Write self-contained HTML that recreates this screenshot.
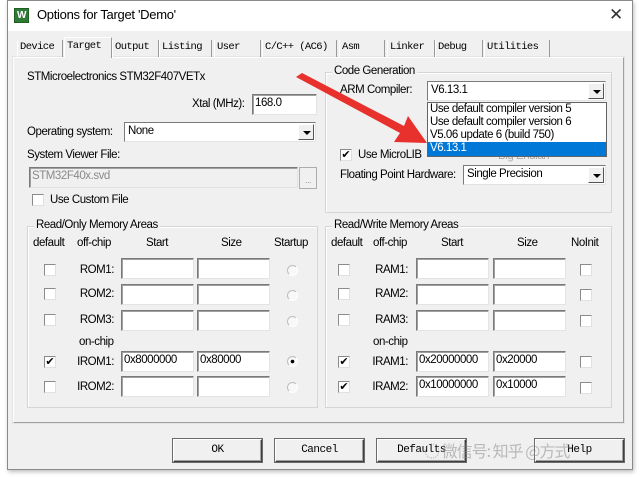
<!DOCTYPE html>
<html><head><meta charset="utf-8"><style>
*{box-sizing:border-box;margin:0;padding:0}
body{width:640px;height:477px;background:#fff;position:relative;overflow:hidden;font-family:"Liberation Sans",Arial,sans-serif;font-size:11.5px;letter-spacing:-.45px;color:#000}
.a{position:absolute;white-space:nowrap}
.win{position:absolute;left:7px;top:0;width:626px;height:470px;background:#f0f0f0;border:1px solid #8a8a8a;box-shadow:1px 2px 4px rgba(0,0,0,.25)}
.title{position:absolute;left:8px;top:1px;width:624px;height:30px;background:#fff}
.panel{position:absolute;left:13px;top:57px;width:611px;height:366px;border:1px solid #fff;border-right-color:#a0a0a0;border-bottom-color:#a0a0a0;outline:1px solid #e3e3e3}
.tab{position:absolute;top:40px;height:17px;font-family:"Liberation Mono",monospace;font-size:10.5px;letter-spacing:-.6px;white-space:nowrap;border-left:1px solid #fff;border-right:1px solid #999;padding-left:2px;line-height:15px}
.tab.sel{top:37px;height:21px;background:#f0f0f0;border-top:1px solid #fff;z-index:2}
.grp{position:absolute;border:1px solid #d5d5d5;box-shadow:1px 1px 0 #fff inset}
.lg{position:absolute;background:#f0f0f0;padding:0 2px;top:-8px;left:6px;white-space:nowrap}
.in{position:absolute;background:#fff;border:1px solid #7a7a7a;border-right-color:#e3e3e3;border-bottom-color:#e3e3e3;box-shadow:inset 1px 1px 0 #a0a0a0;height:21px;padding:2px 0 0 2px;white-space:nowrap;overflow:hidden}
.cb{position:absolute;width:12px;height:12px;background:#fff;border:1px solid #8a8a8a;border-right-color:#e0e0e0;border-bottom-color:#e0e0e0;font-size:11px;line-height:10px;text-align:center;letter-spacing:0}
.rd{position:absolute;width:11px;height:11px;border-radius:50%;border:1px solid #bdbdbd;border-right-color:#fff;border-bottom-color:#fff;background:#f8f8f8}
.sel2{position:absolute;background:#fff;border:1px solid #7a7a7a;border-right-color:#e3e3e3;border-bottom-color:#e3e3e3;height:20px;padding:2px 0 0 3px;white-space:nowrap}
.dd{position:absolute;right:1px;top:1px;width:16px;height:16px;background:#f0f0f0;border:1px solid #fff;border-right-color:#555;border-bottom-color:#555}
.dd:after{content:"";position:absolute;left:4px;top:6px;border:4px solid transparent;border-top:4px solid #000;border-bottom:0}
.btn{position:absolute;top:439px;height:23px;width:89px;background:#f0f0f0;border:1px solid #fff;border-right-color:#404040;border-bottom-color:#404040;box-shadow:inset -1px -1px 0 #a0a0a0;outline:1px solid #6a6a6a;font-family:"Liberation Mono",monospace;font-size:11px;letter-spacing:-.5px;text-align:center;line-height:20px}
.r{text-align:right}
</style></head><body>
<div class="win"></div>
<div class="title"></div>
<div class="a" style="left:14px;top:8px;width:15px;height:15px;background:#2f7a36;border:1px solid #1f5f1f;color:#fff;font-size:10px;font-weight:bold;line-height:13px;text-align:center">W</div>
<div class="a" style="left:37px;top:7px;font-size:13px;letter-spacing:-.3px">Options for Target 'Demo'</div>
<div class="a" style="left:609px;top:5px;font-size:17px;color:#333">✕</div>

<div class="panel"></div>
<div class="tab" style="left:17px;width:46px">Device</div>
<div class="tab sel" style="left:64px;width:48px;padding-top:1px">Target</div>
<div class="tab" style="left:112px;width:47px">Output</div>
<div class="tab" style="left:159px;width:53px">Listing</div>
<div class="tab" style="left:214px;width:47px">User</div>
<div class="tab" style="left:262px;width:75px">C/C++ (AC6)</div>
<div class="tab" style="left:339px;width:46px">Asm</div>
<div class="tab" style="left:387px;width:48px">Linker</div>
<div class="tab" style="left:435px;width:48px">Debug</div>
<div class="tab" style="left:484px;width:66px">Utilities</div>

<div class="a" style="left:27px;top:71px">STMicroelectronics STM32F407VETx</div>
<div class="a" style="left:192px;top:98px">Xtal (MHz):</div>
<div class="in" style="left:252px;top:94px;width:65px">168.0</div>
<div class="a" style="left:27px;top:126px">Operating system:</div>
<div class="sel2" style="left:124px;top:122px;width:192px">None<div class="dd"></div></div>
<div class="a" style="left:27px;top:149px">System Viewer File:</div>
<div class="in" style="left:29px;top:167px;width:269px;background:#f0f0f0;color:#8a8a8a">STM32F40x.svd</div>
<div class="a" style="left:299px;top:167px;width:18px;height:22px;border:1px solid #adadad;background:#f0f0f0;color:#999;font-size:9px;text-align:center;line-height:24px">...</div>
<div class="cb" style="left:32px;top:194px"></div>
<div class="a" style="left:50px;top:194px">Use Custom File</div>

<div class="grp" style="left:325px;top:72px;width:287px;height:141px"><div class="lg">Code Generation</div></div>
<div class="a" style="left:340px;top:84px">ARM Compiler:</div>
<div class="sel2" style="left:427px;top:81px;width:179px">V6.13.1<div class="dd"></div></div>
<div class="cb" style="left:340px;top:149px">✔</div>
<div class="a" style="left:358px;top:149px">Use MicroLIB</div>
<div class="a" style="left:498px;top:150px;color:#aaa">Big Endian</div>
<div class="a" style="left:340px;top:169px">Floating Point Hardware:</div>
<div class="sel2" style="left:463px;top:165px;width:143px">Single Precision<div class="dd"></div></div>
<div class="a" style="left:427px;top:102px;width:180px;height:55px;background:#fff;border:1px solid #646464;line-height:13px;padding-left:2px">Use default compiler version 5<br>Use default compiler version 6<br>V5.06 update 6 (build 750)</div>
<div class="a" style="left:428px;top:142px;width:178px;height:14px;background:#0078d7;color:#fff;line-height:13px;padding-left:2px">V6.13.1</div>

<svg class="a" style="left:0;top:0" width="640" height="477"><path d="M296 77 L302 73 L404 126 L408 116 L427 143 L394 142 L400 133 Z" fill="#e8302c"/></svg>

<div class="grp" style="left:27px;top:226px;width:291px;height:182px"><div class="lg">Read/Only Memory Areas</div></div>
<div class="a" style="left:33px;top:237px">default</div><div class="a" style="left:77px;top:237px">off-chip</div>
<div class="a" style="left:146px;top:237px">Start</div><div class="a" style="left:221px;top:237px">Size</div><div class="a" style="left:274px;top:237px">Startup</div>
<div class="grp" style="left:325px;top:226px;width:287px;height:182px"><div class="lg">Read/Write Memory Areas</div></div>
<div class="a" style="left:331px;top:237px">default</div><div class="a" style="left:373px;top:237px">off-chip</div>
<div class="a" style="left:441px;top:237px">Start</div><div class="a" style="left:517px;top:237px">Size</div><div class="a" style="left:571px;top:237px">NoInit</div>
<div class="a" style="left:79px;top:336px">on-chip</div>
<div class="a" style="left:373px;top:336px">on-chip</div>

<div class="cb" style="left:44px;top:264px"></div><div class="a r" style="left:70px;top:264px;width:44px">ROM1:</div><div class="in" style="left:121px;top:258px;width:73px"></div><div class="in" style="left:197px;top:258px;width:73px"></div><div class="rd" style="left:287px;top:265px"></div>
<div class="cb" style="left:44px;top:288px"></div><div class="a r" style="left:70px;top:288px;width:44px">ROM2:</div><div class="in" style="left:121px;top:284px;width:73px"></div><div class="in" style="left:197px;top:284px;width:73px"></div><div class="rd" style="left:287px;top:290px"></div>
<div class="cb" style="left:44px;top:314px"></div><div class="a r" style="left:70px;top:314px;width:44px">ROM3:</div><div class="in" style="left:121px;top:310px;width:73px"></div><div class="in" style="left:197px;top:310px;width:73px"></div><div class="rd" style="left:287px;top:316px"></div>
<div class="cb" style="left:44px;top:356px">✔</div><div class="a r" style="left:70px;top:356px;width:44px">IROM1:</div><div class="in" style="left:121px;top:351px;width:73px">0x8000000</div><div class="in" style="left:197px;top:351px;width:73px">0x80000</div><div class="rd" style="left:287px;top:356px;background:radial-gradient(#000 25%,#f8f8f8 32%)"></div>
<div class="cb" style="left:44px;top:381px"></div><div class="a r" style="left:70px;top:381px;width:44px">IROM2:</div><div class="in" style="left:121px;top:376px;width:73px"></div><div class="in" style="left:197px;top:376px;width:73px"></div><div class="rd" style="left:287px;top:382px"></div>

<div class="cb" style="left:338px;top:264px"></div><div class="a r" style="left:364px;top:264px;width:44px">RAM1:</div><div class="in" style="left:416px;top:258px;width:73px"></div><div class="in" style="left:493px;top:258px;width:73px"></div><div class="cb" style="left:580px;top:264px"></div>
<div class="cb" style="left:338px;top:288px"></div><div class="a r" style="left:364px;top:288px;width:44px">RAM2:</div><div class="in" style="left:416px;top:284px;width:73px"></div><div class="in" style="left:493px;top:284px;width:73px"></div><div class="cb" style="left:580px;top:289px"></div>
<div class="cb" style="left:338px;top:314px"></div><div class="a r" style="left:364px;top:314px;width:44px">RAM3:</div><div class="in" style="left:416px;top:310px;width:73px"></div><div class="in" style="left:493px;top:310px;width:73px"></div><div class="cb" style="left:580px;top:315px"></div>
<div class="cb" style="left:338px;top:356px">✔</div><div class="a r" style="left:364px;top:356px;width:44px">IRAM1:</div><div class="in" style="left:416px;top:351px;width:73px">0x20000000</div><div class="in" style="left:493px;top:351px;width:73px">0x20000</div><div class="cb" style="left:580px;top:356px"></div>
<div class="cb" style="left:338px;top:381px">✔</div><div class="a r" style="left:364px;top:381px;width:44px">IRAM2:</div><div class="in" style="left:416px;top:376px;width:73px">0x10000000</div><div class="in" style="left:493px;top:376px;width:73px">0x10000</div><div class="cb" style="left:580px;top:382px"></div>

<div class="btn" style="left:173px">OK</div>
<div class="btn" style="left:275px">Cancel</div>
<div class="btn" style="left:377px">Defaults</div>
<div class="btn" style="left:535px">Help</div>
<div class="a" style="left:424px;top:438px;font-family:'Noto Sans CJK SC',sans-serif;font-size:16px;letter-spacing:-1px;color:rgba(140,140,140,.55)">◌ 微信号: 知乎 @方式</div>
</body></html>
